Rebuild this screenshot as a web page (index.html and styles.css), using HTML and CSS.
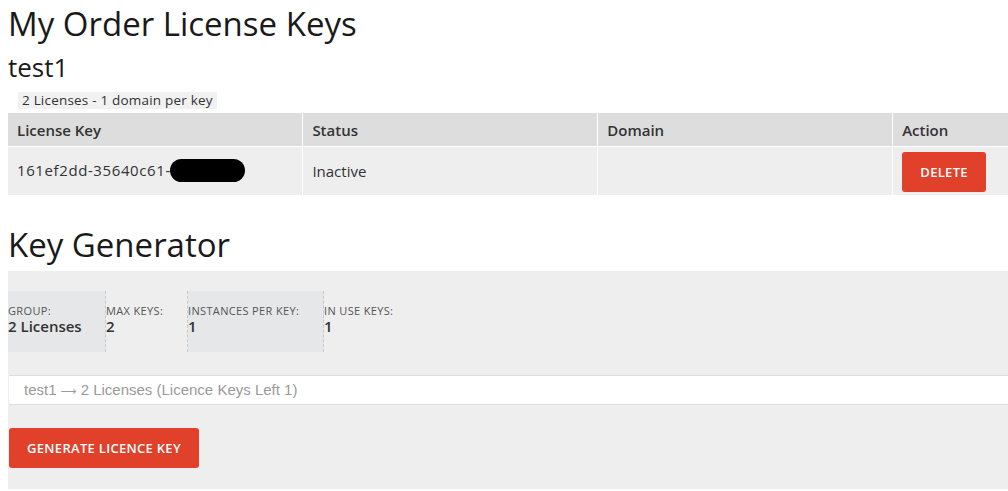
FILE: index.html
```html
<!DOCTYPE html>
<html>
<head>
<meta charset="utf-8">
<link rel="stylesheet" href="styles.css">
</head>
<body>
<div class="page">
  <h1 class="title">My Order License Keys</h1>
  <h2 class="subtitle">test1</h2>
  <div class="note"><span>2 Licenses - 1 domain per key</span></div>
  <table class="keys">
    <thead>
      <tr><th>License Key</th><th>Status</th><th>Domain</th><th>Action</th></tr>
    </thead>
    <tbody>
      <tr>
        <td><span class="key">161ef2dd-35640c61-</span><span class="redact"></span></td>
        <td>Inactive</td>
        <td></td>
        <td><button class="btn btn-small">DELETE</button></td>
      </tr>
    </tbody>
  </table>
  <h1 class="title gen-title">Key Generator</h1>
  <div class="panel">
    <div class="stats">
      <div class="stat shaded"><div class="lbl">GROUP:</div><div class="val">2 Licenses</div></div>
      <div class="stat"><div class="lbl">MAX KEYS:</div><div class="val">2</div></div>
      <div class="stat shaded"><div class="lbl">INSTANCES PER KEY:</div><div class="val">1</div></div>
      <div class="stat"><div class="lbl">IN USE KEYS:</div><div class="val">1</div></div>
    </div>
    <div class="select">test1 <span class="arrow">⟶</span> 2 Licenses (Licence Keys Left 1)</div>
    <button class="btn btn-big">GENERATE LICENCE KEY</button>
  </div>
</div>
</body>
</html>
```
FILE: styles.css
```css
html, body { margin: 0; padding: 0; overflow: hidden; background: #fff; }
body { font-family: "Open Sans", "Noto Sans", sans-serif; color: #222; }
.page { padding: 0 0 0 8px; width: 1190px; }
.title { font-size: 33px; font-weight: 400; margin: 0; line-height: 48px; color: #1a1a1a; }
.subtitle { font-size: 26px; font-weight: 400; margin: 0; line-height: 36px; color: #1a1a1a; margin-top: 1px; }
.note { padding: 7px 0 0 10px; height: 17px; }
.note span { background: #f1f1f1; font-size: 13.5px; line-height: 17px; color: #333; padding: 0 4px; display: inline-block; letter-spacing: 0.2px; vertical-align: top; }
.keys { border-collapse: collapse; width: 1180px; margin-top: 4px; table-layout: fixed; }
.keys th, .keys td { border: 1px solid #fff; text-align: left; padding: 0 9px; font-size: 15px; color: #333; }
.keys th { background: #dddddd; font-weight: 600; height: 33px; border-top: none; border-left: none; }
.keys td { background: #eeeeee; height: 48px; border-left: none; }
.keys td:first-child, .keys th:first-child { border-left: none; }
.key { letter-spacing: 0.6px; }
.redact { display: inline-block; width: 75px; height: 23px; background: #000; border-radius: 12px; vertical-align: middle; margin-left: -1px; margin-top: -3px; }
.btn { background: #e1402a; color: #fff; border: none; border-radius: 3px; font-family: "Open Sans", sans-serif; font-weight: 600; font-size: 13px; letter-spacing: 0.3px; cursor: pointer; padding: 0; }
.btn-small { width: 84px; height: 40px; display: block; margin-top: 1px; }
.gen-title { margin-top: 26px; line-height: 46px; }
.panel { background: #eeeeee; margin-top: 3px; padding: 20px 0 21px 0; }
.stats { display: flex; height: 61px; }
.stat { border-right: 1px dashed #c8c8c8; padding-top: 13px; box-sizing: border-box; }
.stat:last-child { border-right: none; }
.stat.shaded { background: #e6e7e9; }
.stat:nth-child(1) { width: 98px; }
.stat:nth-child(2) { width: 82px; }
.stat:nth-child(3) { width: 136px; }
.lbl { font-size: 11px; color: #555; line-height: 14px; letter-spacing: 0.35px; }
.val { font-size: 15px; font-weight: 600; color: #333; line-height: 16px; }
.select { margin: 23px 0 0 1px; height: 28px; background: #fff; border: 1px solid #dcdcdc; border-left: none; font-family: "Liberation Sans", Arial, sans-serif; font-size: 15px; color: #9a9a9a; line-height: 28px; padding-left: 15px; }
.arrow { font-family: "DejaVu Sans", sans-serif; font-size: 11px; }
.btn-big { margin: 23px 0 0 1px; width: 190px; height: 40px; display: block; }
```
